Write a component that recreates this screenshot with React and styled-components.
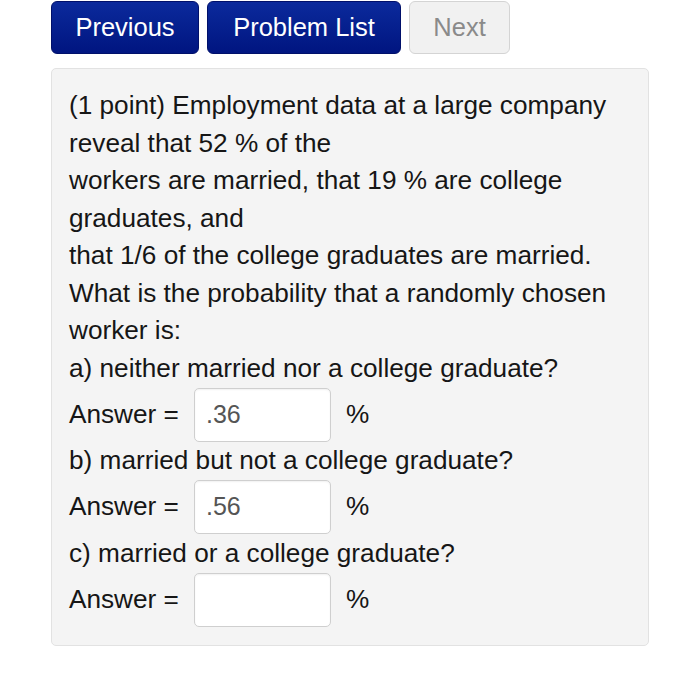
import React from "react";
import styled, { createGlobalStyle } from "styled-components";

const Global = createGlobalStyle`
  html, body { margin: 0; padding: 0; background: #ffffff; }
  body { font-family: "Liberation Sans", Arial, Helvetica, sans-serif; color: #1a1a1a; }
`;

const Page = styled.div`
  padding: 1px 51px 0 51px;
  width: 598px;
`;

const Toolbar = styled.div`
  display: flex;
  gap: 8px;
  height: 53px;
`;

const NavButton = styled.button`
  font-family: "Liberation Sans", Arial, sans-serif;
  font-size: 25.5px;
  height: 53px;
  width: ${(p) => p.$w}px;
  padding: 0;
  border-radius: 6px;
  cursor: pointer;
  ${(p) =>
    p.$disabled
      ? `
    background: #f1f1f1;
    border: 1px solid #d4d4d4;
    color: #8a8a8a;
  `
      : `
    background: linear-gradient(#0b2a9c, #001580);
    border: 1px solid #00106a;
    color: #ffffff;
  `}
`;

const Panel = styled.div`
  margin-top: 14px;
  background: #f4f4f4;
  border: 1px solid #e2e2e2;
  border-radius: 5px;
  padding: 18px 17px 18px 17px;
  font-size: 26.2px;
  line-height: 37.5px;
  color: #161616;
`;

const Line = styled.div`
  white-space: nowrap;
`;

const AnswerRow = styled.div`
  display: flex;
  align-items: center;
  height: 55px;
`;

const Label = styled.span`
  width: 125px;
`;

const Input = styled.div`
  box-sizing: border-box;
  width: 137px;
  height: 54px;
  background: #ffffff;
  border: 1px solid #cfcfcf;
  border-radius: 5px;
  display: flex;
  align-items: center;
  padding-left: 11px;
  font-size: 25px;
  color: #555555;
  box-shadow: inset 0 1px 2px rgba(0,0,0,0.06);
`;

const Unit = styled.span`
  margin-left: 15px;
`;

function Answer({ value }) {
  return (
    <AnswerRow>
      <Label>Answer =</Label>
      <Input>{value}</Input>
      <Unit>%</Unit>
    </AnswerRow>
  );
}

export default function App() {
  return (
    <Page>
      <Global />
      <Toolbar>
        <NavButton $w={148}>Previous</NavButton>
        <NavButton $w={194}>Problem List</NavButton>
        <NavButton $w={101} $disabled>Next</NavButton>
      </Toolbar>
      <Panel>
        <Line>(1 point) Employment data at a large company</Line>
        <Line>reveal that 52 % of the</Line>
        <Line>workers are married, that 19 % are college</Line>
        <Line>graduates, and</Line>
        <Line>that 1/6 of the college graduates are married.</Line>
        <Line>What is the probability that a randomly chosen</Line>
        <Line>worker is:</Line>
        <Line>a) neither married nor a college graduate?</Line>
        <Answer value=".36" />
        <Line>b) married but not a college graduate?</Line>
        <Answer value=".56" />
        <Line>c) married or a college graduate?</Line>
        <Answer value="" />
      </Panel>
    </Page>
  );
}
